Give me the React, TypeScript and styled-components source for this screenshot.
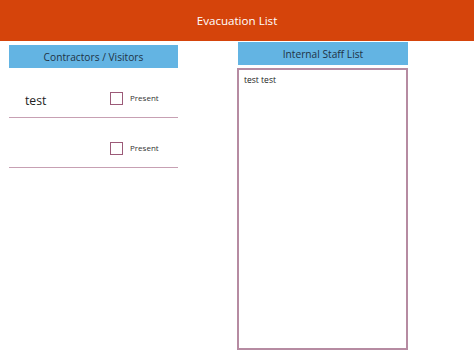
import styled, { createGlobalStyle } from "styled-components";

const GlobalStyle = createGlobalStyle`
  html, body {
    margin: 0;
    padding: 0;
    background: #ffffff;
    font-family: "Open Sans", "Noto Sans", sans-serif;
  }
`;

const contractors = [{ id: "c1", name: "test" }, { id: "c2", name: "" }];

const Page = styled.div`
  width: 474px;
  height: 355px;
  overflow: hidden;
`;

const Header = styled.div`
  height: 41px;
  background: #d5440b;
  color: #ffffff;
  font-size: 11.6px;
  display: flex;
  align-items: center;
  justify-content: center;
`;

const Columns = styled.div`
  display: flex;
  padding: 0 0 0 9px;
`;

const LeftColumn = styled.div`
  width: 169px;
  padding-top: 4px;
`;

const RightColumn = styled.div`
  width: 171px;
  margin-left: 59px;
  padding-top: 1px;
  display: flex;
  flex-direction: column;
  align-items: flex-end;
`;

const SectionTitle = styled.div<{ $width: number }>`
  width: ${(p) => p.$width}px;
  height: 23px;
  background: #63b4e3;
  color: #1f3345;
  font-size: 10.2px;
  display: flex;
  align-items: center;
  justify-content: center;
`;

const Row = styled.div`
  height: 50px;
  box-sizing: border-box;
  border-bottom: 1px solid #c7a0b3;
  display: flex;
  align-items: flex-start;
  padding-top: 24px;
`;

const Name = styled.div`
  width: 101px;
  padding-left: 16px;
  font-size: 12.2px;
  line-height: 18px;
  color: #222222;
  box-sizing: border-box;
`;

const CheckLabel = styled.label`
  display: flex;
  align-items: flex-start;
  gap: 7px;
  font-size: 8px;
  line-height: 12px;
  color: #333333;
`;

const Box = styled.span`
  width: 13px;
  height: 13px;
  box-sizing: border-box;
  border: 1.5px solid #9c5a78;
  background: #ffffff;
`;

const StaffBox = styled.div`
  width: 171px;
  height: 282px;
  margin-top: 3px;
  box-sizing: border-box;
  border: 2px solid #b68ba2;
  padding: 4px 5px;
  font-size: 8.5px;
  color: #222222;
`;

export default function App() {
  return (
    <Page>
      <GlobalStyle />
      <Header>Evacuation List</Header>
      <Columns>
        <LeftColumn>
          <SectionTitle $width={169}>Contractors / Visitors</SectionTitle>
          {contractors.map((c) => (
            <Row key={c.id}>
              <Name>{c.name}</Name>
              <CheckLabel>
                <Box />
                Present
              </CheckLabel>
            </Row>
          ))}
        </LeftColumn>
        <RightColumn>
          <SectionTitle $width={170}>Internal Staff List</SectionTitle>
          <StaffBox>test test</StaffBox>
        </RightColumn>
      </Columns>
    </Page>
  );
}
